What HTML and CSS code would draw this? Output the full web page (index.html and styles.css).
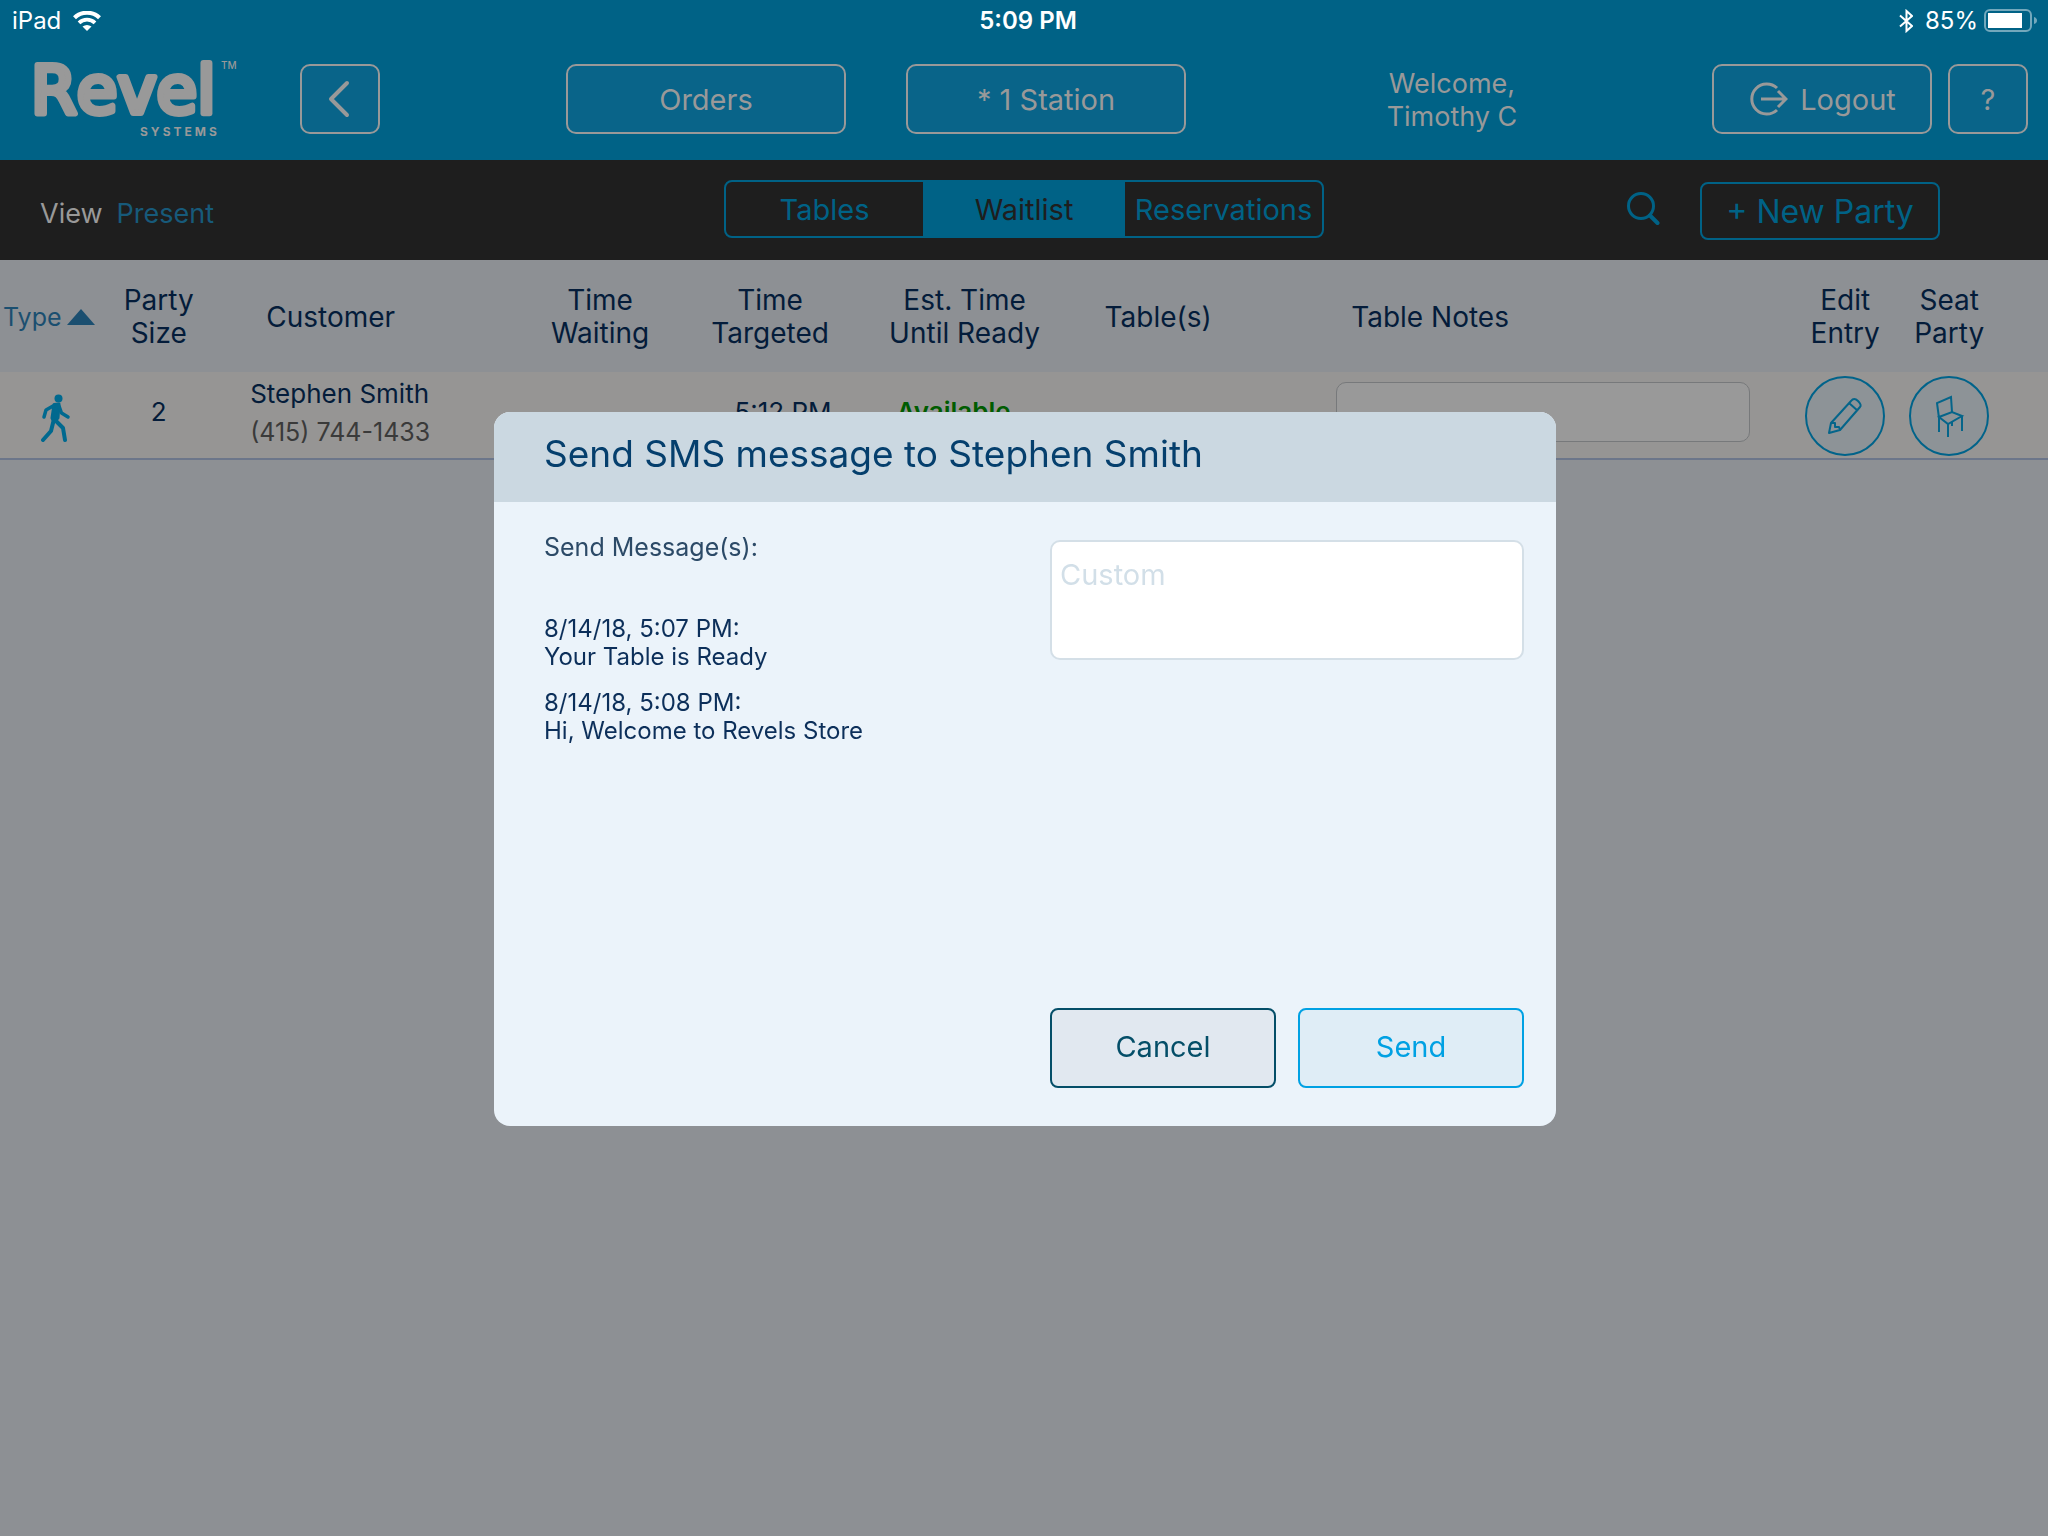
FILE: index.html
```html
<!DOCTYPE html>
<html lang="en">
<head>
<meta charset="utf-8">
<meta name="viewport" content="width=device-width, initial-scale=1">
<title>Revel Systems - Waitlist</title>
<link rel="stylesheet" href="styles.css">
</head>
<body>
<div class="status">
  <div class="status-side">
    <span>iPad</span>
    <svg width="28" height="20" viewBox="0 0 28 20" fill="none" stroke="#fff" aria-hidden="true">
      <path d="M1.500 6.800A18 18 0 0 1 26.500 6.800" stroke-width="4.200"/>
      <path d="M6 11.800A11.500 11.500 0 0 1 22 11.800" stroke-width="3.800"/>
      <path d="M9.500 15.600Q14 12.200 18.500 15.600L14 20Z" fill="#fff" stroke="none"/>
    </svg>
  </div>
  <div class="status-time">5:09 PM</div>
  <div class="status-side status-right">
    <svg class="bluetooth" width="14" height="24" viewBox="0 0 14 24" fill="none" stroke="#fff" stroke-width="2" aria-hidden="true">
      <path d="M1 6.500L13 17L7.500 22V2L13 7L1 17.500"/>
    </svg>
    <span>85%</span>
    <svg width="54" height="24" viewBox="0 0 54 24" aria-hidden="true">
      <rect x="1" y="1" width="46" height="21" rx="5" fill="none" stroke="#fff" stroke-opacity=".45" stroke-width="2"/>
      <rect x="4" y="4" width="34" height="15" fill="#fff"/>
      <path d="M50 8Q53 9 53 11.500T50 15Z" fill="#fff" fill-opacity=".45"/>
    </svg>
  </div>
</div>

<header class="topbar">
  <svg class="logo" width="202" height="80" viewBox="0 0 202 80" role="img" aria-label="Revel Systems">
    <text class="logo-word" x="-3" y="49">Revel</text>
    <text class="logo-tm" x="187" y="5">TM</text>
    <text class="logo-sub" x="106" y="72">SYSTEMS</text>
  </svg>
  <button class="btn btn-small" aria-label="Back">
    <svg width="24" height="40" viewBox="0 0 24 40" fill="none" stroke="currentColor" stroke-width="4" stroke-linecap="round" stroke-linejoin="round"><path d="M19 4L3 20L19 36"/></svg>
  </button>
  <button class="btn btn-wide">Orders</button>
  <button class="btn btn-wide">* 1 Station</button>
  <p class="welcome">Welcome,<br>Timothy C</p>
  <div class="session">
    <button class="btn btn-logout">
      <svg width="40" height="36" viewBox="0 0 40 36" fill="none" stroke="currentColor" stroke-width="3"><path d="M29 7A15 15 0 1 0 29 29M13 18H37M30 10L38 18L30 26"/></svg>
      Logout
    </button>
    <button class="btn btn-small">?</button>
  </div>
</header>

<nav class="subbar">
  <div class="view"><span>View</span><a href="#present">Present</a></div>
  <div class="segments">
    <button>Tables</button>
    <button class="active">Waitlist</button>
    <button>Reservations</button>
  </div>
  <div class="actions">
    <button class="search" aria-label="Search">
      <svg width="34" height="34" viewBox="0 0 34 34" fill="none" stroke="currentColor" stroke-width="3" stroke-linecap="round"><circle cx="15" cy="14" r="12.500"/><path d="M24 23.500L31.500 31" stroke-width="4"/></svg>
    </button>
    <button class="new-party">+ New Party</button>
  </div>
</nav>

<main>
  <table class="waitlist">
    <colgroup>
      <col class="c-type"><col class="c-size"><col class="c-customer"><col class="c-waiting"><col class="c-targeted"><col class="c-est"><col class="c-tables"><col class="c-notes"><col class="c-edit"><col class="c-seat">
    </colgroup>
    <thead>
      <tr>
        <th class="type" scope="col"><button class="sort">Type<svg width="28" height="16" viewBox="0 0 28 16" aria-hidden="true"><path d="M14 0L28 16H0Z" fill="currentColor"/></svg></button></th>
        <th scope="col">Party<br>Size</th>
        <th class="customer" scope="col">Customer</th>
        <th scope="col">Time<br>Waiting</th>
        <th scope="col">Time<br>Targeted</th>
        <th scope="col">Est. Time<br>Until Ready</th>
        <th scope="col">Table(s)</th>
        <th class="notes" scope="col">Table Notes</th>
        <th scope="col">Edit<br>Entry</th>
        <th class="seat" scope="col">Seat<br>Party</th>
      </tr>
    </thead>
    <tbody>
      <tr>
        <td class="walk">
          <svg width="32" height="48" viewBox="0 0 32 48" fill="none" stroke="currentColor" stroke-linecap="round" stroke-linejoin="round" role="img" aria-label="Walk-in">
            <circle cx="18.500" cy="4.500" r="4" fill="currentColor" stroke="none"/>
            <path d="M14 10.500L19 10L18 24L14 28L12 24Z" fill="currentColor" stroke-width="3"/>
            <path d="M13 12L6 16L4 23M19 12L21.500 19L28 23" stroke-width="3.500"/>
            <path d="M13.500 27L11 37L3 46M16 27L23 34L25 46" stroke-width="4"/>
          </svg>
        </td>
        <td>2</td>
        <td class="customer"><span class="name">Stephen Smith</span><span class="phone">(415) 744-1433</span></td>
        <td class="waiting">-</td>
        <td class="targeted">5:12 PM</td>
        <td class="available">Available</td>
        <td></td>
        <td class="notes"><input type="text" aria-label="Table notes"></td>
        <td class="action">
          <button class="round" aria-label="Edit entry">
            <svg width="36" height="40" viewBox="0 0 36 40" fill="none" stroke="currentColor" stroke-width="2" stroke-linejoin="round"><path d="M2 37L4 27L24 5Q27 1 31 5T33 11L13 34ZM22 7L31 15M4 27L8 27L8 31L12 31L13 34"/></svg>
          </button>
        </td>
        <td class="action seat">
          <button class="round" aria-label="Seat party">
            <svg width="36" height="44" viewBox="0 0 36 44" fill="none" stroke="currentColor" stroke-width="2"><path d="M8 24L6 9L20 3L21 18M8 23L21 18L31 22L17 30ZM8 23V38M17 30V43M31 22V37M21 28V32"/></svg>
          </button>
        </td>
      </tr>
    </tbody>
  </table>
</main>

<div class="overlay">
  <section class="modal" role="dialog" aria-modal="true" aria-labelledby="sms-title">
    <h1 class="modal-title" id="sms-title">Send SMS message to Stephen Smith</h1>
    <form class="modal-body">
      <div class="history">
        <label class="history-label" for="custom">Send Message(s):</label>
        <p>8/14/18, 5:07 PM:<br>Your Table is Ready</p>
        <p>8/14/18, 5:08 PM:<br>Hi, Welcome to Revels Store</p>
      </div>
      <div class="compose">
        <textarea id="custom" placeholder="Custom"></textarea>
        <div class="modal-buttons">
          <button type="button" class="cancel">Cancel</button>
          <button type="submit" class="send">Send</button>
        </div>
      </div>
    </form>
  </section>
</div>
</body>
</html>
```
FILE: styles.css
```css
:root {
  --blue: #006286;
  --muted: #999;
  --navy: #041c3a;
}

* { box-sizing: border-box; }

body {
  margin: 0;
  min-height: 100vh;
  background: #8d9094;
  color: var(--navy);
  font-family: Inter, "Liberation Sans", sans-serif;
  font-size: 28px;
}

button, input, textarea { font: inherit; color: inherit; }
button { padding: 0; background: none; border: 0; cursor: pointer; }
svg { display: block; flex: none; }
p { margin: 0; }

/* Device status bar */
.status {
  display: grid;
  grid-template-columns: 1fr auto 1fr;
  align-items: center;
  height: 40px;
  padding: 1px 10px 0 12px;
  background: var(--blue);
  color: #fff;
  font-size: 24px;
}
.status-side { display: flex; align-items: center; gap: 12px; }
.status-right { justify-content: flex-end; gap: 6px; }
.bluetooth { margin-right: 6px; }
.status-time { padding-left: 6px; font-weight: 600; }

/* Header */
.topbar {
  display: grid;
  grid-template-columns: 266fr 266fr 340fr 340fr 466fr auto;
  align-items: start;
  height: 120px;
  padding: 24px 20px 0 34px;
  background: var(--blue);
  color: var(--muted);
}
.logo { overflow: visible; fill: var(--muted); }
.logo-word {
  font: 400 66px "DejaVu Sans", sans-serif;
  font-kerning: none;
  stroke: var(--muted);
  stroke-width: 6px;
  stroke-linejoin: round;
}
.logo-tm { font: 500 10px Inter, sans-serif; }
.logo-sub { font: 700 12px Inter, sans-serif; letter-spacing: 3px; }

.btn {
  display: flex;
  align-items: center;
  justify-content: center;
  gap: 12px;
  height: 70px;
  background: #096489;
  border: 2px solid var(--muted);
  border-radius: 10px;
  font-size: 29px;
}
.btn-small { width: 80px; }
.btn-wide { width: 280px; }
.btn-logout { width: 220px; }
.welcome {
  padding: 3px 54px 0 0;
  font-size: 27px;
  line-height: 33px;
  text-align: center;
}
.session { display: flex; gap: 16px; }

/* View bar */
.subbar {
  display: grid;
  grid-template-columns: 1fr 600px 1fr;
  align-items: start;
  height: 100px;
  padding-top: 20px;
  background: #1e1e1e;
  color: var(--blue);
}
.view {
  display: flex;
  gap: 14px;
  padding: 16px 0 0 40px;
  font-size: 27px;
  line-height: 36px;
}
.view span { color: var(--muted); }
.view a { color: #175a7a; text-decoration: none; }
.segments {
  display: grid;
  grid-template-columns: minmax(0, 197fr) minmax(0, 202fr) minmax(0, 197fr);
  height: 58px;
  border: 2px solid var(--blue);
  border-radius: 8px;
  overflow: hidden;
  font-size: 29px;
}
.segments .active { background: var(--blue); color: #1e1e1e; }
.actions {
  display: flex;
  align-items: center;
  justify-content: flex-end;
  gap: 40px;
  padding: 2px 108px 0 0;
}
.search { padding-bottom: 4px; }
.new-party {
  width: 240px;
  height: 58px;
  border: 2px solid var(--blue);
  border-radius: 8px;
  font-size: 32px;
}

/* Waitlist table */
.waitlist {
  width: 100%;
  table-layout: fixed;
  border-collapse: separate;
  border-spacing: 0;
  text-align: center;
}
.c-type { width: 4.7%; }
.c-size { width: 6.1%; }
.c-customer { width: 14.6%; }
.c-waiting { width: 7.8%; }
.c-targeted { width: 8.8%; }
.c-est { width: 10.2%; }
.c-tables { width: 8.7%; }
.c-notes { width: 26.7%; }
.c-edit { width: 5%; }
.c-seat { width: 7.4%; }

th {
  height: 112px;
  padding: 2px 0 0;
  font-weight: 400;
  line-height: 33px;
}
th.type { text-align: left; }
.sort {
  display: flex;
  align-items: center;
  gap: 5px;
  padding-left: 3px;
  color: #1b4f70;
  font-size: 25px;
}
th.customer { padding-right: 80px; }
th.notes { padding-left: 104px; text-align: left; }
.waitlist .seat { padding-right: 46px; }

td {
  height: 88px;
  padding: 0 0 8px;
  background: #969594;
  border-bottom: 2px solid #6c768a;
  font-size: 26px;
}
td.walk { padding: 5px 0 0 40px; color: #00698f; }
td.customer { padding: 0 0 5px 29px; text-align: left; }
.name, .phone { display: block; line-height: 38px; }
.phone { color: #3a3a3a; font-size: 25px; }
td.waiting { padding-right: 14px; }
td.targeted { padding-left: 26px; }
td.available { padding-right: 22px; color: #005c00; font-weight: 600; }
td.notes { padding: 0 44px 6px 89px; }
.notes input {
  display: block;
  width: 100%;
  height: 60px;
  padding: 0 12px;
  background: #999;
  border: 1px solid #77797b;
  border-radius: 10px;
}
td.action { padding-top: 2px; padding-bottom: 0; }
.round {
  display: grid;
  place-items: center;
  width: 80px;
  height: 80px;
  margin: auto;
  background: #8d9397;
  border: 2px solid #00638a;
  border-radius: 50%;
  color: #05658a;
}

/* SMS dialog */
.overlay {
  position: fixed;
  inset: 0;
  display: flex;
  align-items: center;
  justify-content: center;
  padding: 2px 0 0 2px;
}
.modal {
  display: flex;
  flex-direction: column;
  width: 1062px;
  max-width: 96%;
  min-height: 714px;
  background: #ebf3fa;
  border-radius: 16px;
  overflow: hidden;
}
.modal-title {
  margin: 0;
  padding: 18px 50px 24px;
  background: #cbd8e1;
  color: #053f6d;
  font-size: 37px;
  font-weight: 400;
  line-height: 48px;
}
.modal-body {
  display: grid;
  flex: 1;
  grid-template-columns: 1fr 474px;
  padding: 29px 32px 38px 50px;
}
.history {
  color: #0c2f5a;
  font-size: 24px;
  line-height: 28px;
}
.history-label {
  display: block;
  margin-bottom: 52px;
  color: #2c4a67;
  font-size: 25px;
  line-height: 32px;
}
.history p { margin-bottom: 18px; }
.compose {
  display: flex;
  flex-direction: column;
  justify-content: space-between;
  padding-top: 9px;
}
.compose textarea {
  display: block;
  width: 100%;
  height: 120px;
  padding: 16px 8px;
  background: #fff;
  border: 2px solid #d4dfe7;
  border-radius: 10px;
  font-size: 29px;
  line-height: 34px;
  resize: none;
}
.compose textarea::placeholder { color: #d2dfe8; opacity: 1; }
.modal-buttons {
  display: grid;
  grid-template-columns: 1fr 1fr;
  gap: 22px;
}
.modal-buttons button {
  height: 80px;
  padding-bottom: 3px;
  border: 2px solid;
  border-radius: 8px;
  font-size: 29px;
}
.cancel { background: #e1e8f0; color: #044e68; }
.send { background: #dfedf6; color: #00a1e3; }
```
